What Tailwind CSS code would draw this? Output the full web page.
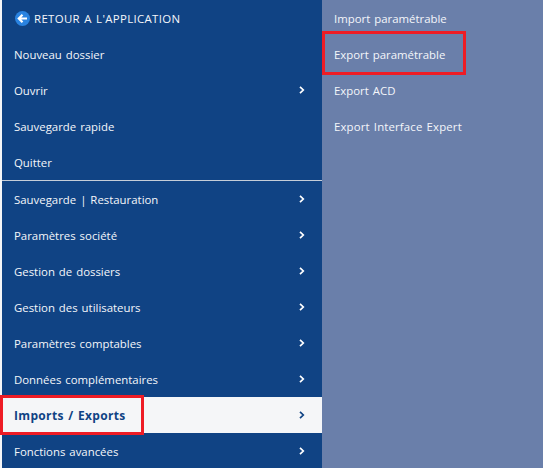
<!DOCTYPE html>
<html lang="fr">
<head>
<meta charset="UTF-8">
<title>Menu</title>
<script src="https://cdn.jsdelivr.net/npm/@tailwindcss/browser@4"></script>
</head>
<body class="w-[543px] h-[468px] overflow-hidden bg-[#f5f6f8] font-['Open_Sans',sans-serif] text-[11.4px] text-[#f4f6fa] [word-spacing:1px]">
<div class="flex h-[468px] pl-[2px]">
  <div class="w-[320px] bg-[#104384] flex flex-col shrink-0">
    <div class="h-9 shrink-0 flex items-center pl-[13px] gap-[4px]">
      <svg class="w-[15px] h-[15px]" viewBox="0 0 15 15"><circle cx="7.5" cy="7.5" r="7.5" fill="#2a83e0"/><path d="M12 7.5H4M7.5 3.8L3.8 7.5l3.7 3.7" fill="none" stroke="#fff" stroke-width="2.2"/></svg>
      <span class="mt-[1px] tracking-[0.35px]">RETOUR A L'APPLICATION</span>
    </div>
    <div class="h-9 shrink-0 flex items-center pl-3"><span class="mt-[1px]">Nouveau dossier</span></div>
    <div class="h-9 shrink-0 flex items-center justify-between pl-3 pr-[17px]"><span class="mt-[1px]">Ouvrir</span>
      <svg class="w-[6px] h-[8px]" viewBox="0 0 6 8"><path d="M1 .8L4.3 4 1 7.2" fill="none" stroke="#fff" stroke-width="1.7"/></svg>
    </div>
    <div class="h-9 shrink-0 flex items-center pl-3"><span class="mt-[1px]">Sauvegarde rapide</span></div>
    <div class="h-9 shrink-0 flex items-center pl-3 border-b border-[#c5cdd8] box-content"><span class="mt-[1px]">Quitter</span></div>
    <div class="h-9 shrink-0 flex items-center justify-between pl-3 pr-[17px]"><span class="mt-[1px]">Sauvegarde | Restauration</span>
      <svg class="w-[6px] h-[8px]" viewBox="0 0 6 8"><path d="M1 .8L4.3 4 1 7.2" fill="none" stroke="#fff" stroke-width="1.7"/></svg>
    </div>
    <div class="h-9 shrink-0 flex items-center justify-between pl-3 pr-[17px]"><span class="mt-[1px]">Paramètres société</span>
      <svg class="w-[6px] h-[8px]" viewBox="0 0 6 8"><path d="M1 .8L4.3 4 1 7.2" fill="none" stroke="#fff" stroke-width="1.7"/></svg>
    </div>
    <div class="h-9 shrink-0 flex items-center justify-between pl-3 pr-[17px]"><span class="mt-[1px]">Gestion de dossiers</span>
      <svg class="w-[6px] h-[8px]" viewBox="0 0 6 8"><path d="M1 .8L4.3 4 1 7.2" fill="none" stroke="#fff" stroke-width="1.7"/></svg>
    </div>
    <div class="h-9 shrink-0 flex items-center justify-between pl-3 pr-[17px]"><span class="mt-[1px]">Gestion des utilisateurs</span>
      <svg class="w-[6px] h-[8px]" viewBox="0 0 6 8"><path d="M1 .8L4.3 4 1 7.2" fill="none" stroke="#fff" stroke-width="1.7"/></svg>
    </div>
    <div class="h-9 shrink-0 flex items-center justify-between pl-3 pr-[17px]"><span class="mt-[1px]">Paramètres comptables</span>
      <svg class="w-[6px] h-[8px]" viewBox="0 0 6 8"><path d="M1 .8L4.3 4 1 7.2" fill="none" stroke="#fff" stroke-width="1.7"/></svg>
    </div>
    <div class="h-9 shrink-0 flex items-center justify-between pl-3 pr-[17px]"><span class="mt-[1px]">Données complémentaires</span>
      <svg class="w-[6px] h-[8px]" viewBox="0 0 6 8"><path d="M1 .8L4.3 4 1 7.2" fill="none" stroke="#fff" stroke-width="1.7"/></svg>
    </div>
    <div class="h-9 shrink-0 flex items-center justify-between pl-3 pr-[17px] bg-[#f5f6f8] text-[#104384] font-bold"><span class="mt-[1px] text-[12px] tracking-[0.33px]">Imports / Exports</span>
      <svg class="w-[6px] h-[8px]" viewBox="0 0 6 8"><path d="M1 .8L4.3 4 1 7.2" fill="none" stroke="#104384" stroke-width="1.7"/></svg>
    </div>
    <div class="h-9 shrink-0 flex items-center justify-between pl-3 pr-[17px]"><span class="mt-[1px]">Fonctions avancées</span>
      <svg class="w-[6px] h-[8px]" viewBox="0 0 6 8"><path d="M1 .8L4.3 4 1 7.2" fill="none" stroke="#fff" stroke-width="1.7"/></svg>
    </div>
  </div>
  <div class="flex-1 bg-[#6a7faa] flex flex-col">
    <div class="h-9 flex items-center pl-3"><span class="mt-[1px]">Import paramétrable</span></div>
    <div class="h-9 flex items-center pl-3"><span class="mt-[1px]">Export paramétrable</span></div>
    <div class="h-9 flex items-center pl-3"><span class="mt-[1px]">Export ACD</span></div>
    <div class="h-9 flex items-center pl-3"><span class="mt-[1px] tracking-[0.15px]">Export Interface Expert</span></div>
  </div>
</div>
<div class="absolute left-0 top-[395px] w-[144px] h-[40px] border-[3px] border-[#ee1c25]"></div>
<div class="absolute left-[322px] top-[31px] w-[144px] h-[44px] border-[3px] border-[#ee1c25]"></div>
</body>
</html>
